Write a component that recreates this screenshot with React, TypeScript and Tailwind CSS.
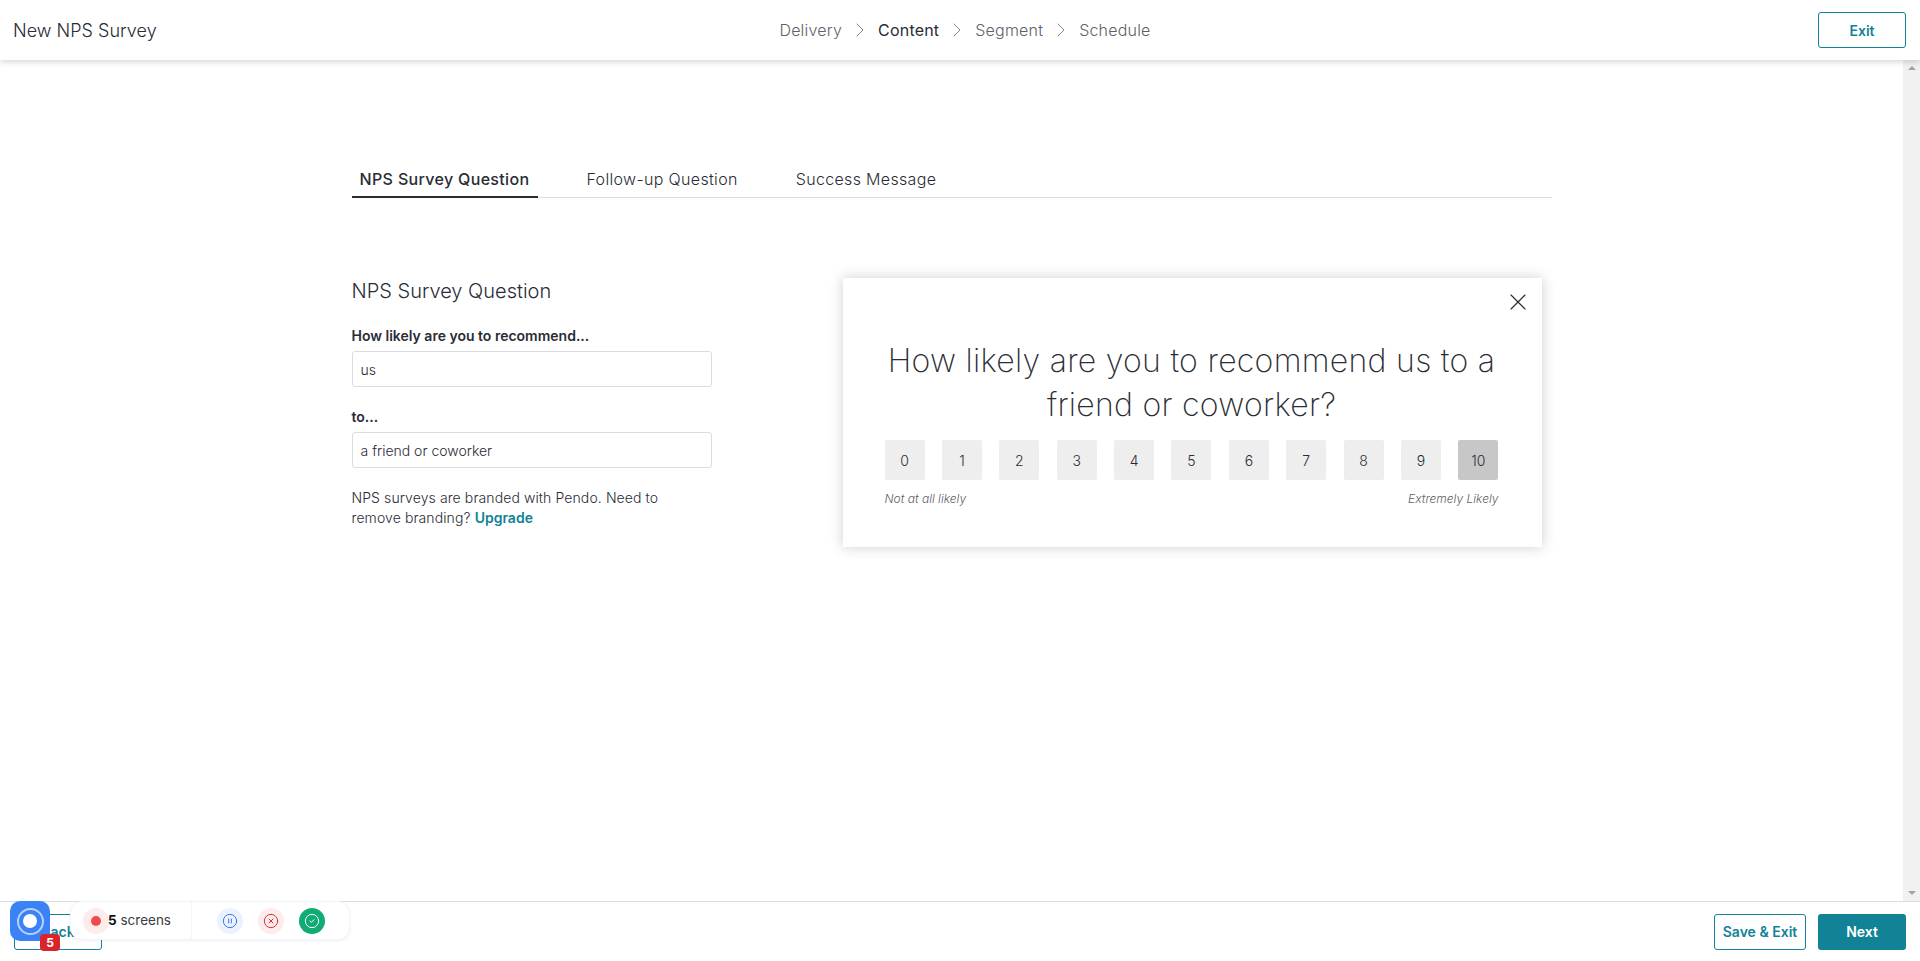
import { ChevronRight, X, CirclePause, CircleX, CircleCheck } from "lucide-react";

const steps = ["Delivery", "Content", "Segment", "Schedule"];
const scores = [0, 1, 2, 3, 4, 5, 6, 7, 8, 9, 10];

const Header = () => {
  return (
    <header className="relative z-10 flex h-[60px] shrink-0 items-center justify-between bg-white pl-[13px] pr-3.5 shadow-[0_2px_6px_rgba(0,0,0,0.16)]">
      <h1 className="w-[200px] text-[18px] font-light tracking-[0.02px] text-[#2a2c35]">New NPS Survey</h1>
      <nav className="ml-[-101px] flex items-center text-[16px] font-light tracking-[0.2px] text-[#2a2c35]">
        {steps.map((step, i) => (
          <div key={step} className="flex items-center">
            <span className={step === "Content" ? "font-normal text-[#2a2c35]" : "text-[#5f6068]"}>{step}</span>
            {i < steps.length - 1 && <ChevronRight size={24} strokeWidth={1} className="mx-[6px] text-[#85868e]" />}
          </div>
        ))}
      </nav>
      <button className="h-9 w-[88px] rounded-[3px] border border-[#128297] text-[14px] font-semibold text-[#128297]">Exit</button>
    </header>
  );
};

const Tabs = () => {
  return (
    <div className="flex h-[37px] items-center border-b border-[#dadce5] text-[16px] font-light tracking-[0.33px] text-[#2a2c35]">
      <div className="mb-[-1px] flex h-[37px] w-[186px] items-center justify-center border-b-2 border-[#2a2c35] font-medium">
        NPS Survey Question
      </div>
      <div className="ml-[49px]">Follow-up Question</div>
      <div className="ml-[58px]">Success Message</div>
    </div>
  );
};

const FormPanel = () => {
  return (
    <div className="w-[360px]">
      <h2 className="text-[20px] font-light leading-[28px] text-[#2a2c35]">NPS Survey Question</h2>
      <label className="mt-[21px] block text-[14px] font-semibold leading-[20px] text-[#2a2c35]">How likely are you to recommend...</label>
      <div className="mt-[5px] flex h-9 items-center rounded-[3px] border border-[#dadce5] px-2 text-[14px] font-light text-[#2a2c35]">us</div>
      <label className="mt-[20px] block text-[14px] font-semibold leading-[20px] text-[#2a2c35]">to...</label>
      <div className="mt-[5px] flex h-9 items-center rounded-[3px] border border-[#dadce5] px-2 text-[14px] font-light text-[#2a2c35]">a friend or coworker</div>
      <p className="mt-[20px] w-[320px] text-[14px] font-light leading-[20px] tracking-[0.1px] text-[#2a2c35]">
        NPS surveys are branded with Pendo. Need to remove branding?{" "}
        <span className="font-semibold tracking-normal text-[#128297]">Upgrade</span>
      </p>
    </div>
  );
};

const Preview = () => {
  return (
    <div className="relative ml-[131px] mt-[1px] h-[269px] w-[699px] bg-white pl-[42px] pr-[43px] shadow-[0_0_12px_rgba(60,60,90,0.25)]">
      <X size={28} strokeWidth={1} className="absolute right-[10px] top-[10px] text-[#2a2c35]" />
      <h3 className="pt-[61px] text-center text-[32px] font-extralight leading-[44px] tracking-[0.28px] text-[#2a2c35]">
        How likely are you to recommend us to a friend or coworker?
      </h3>
      <div className="mt-[13px] flex justify-between">
        {scores.map((n) => (
          <div
            key={n}
            className={`flex h-10 w-10 items-center justify-center rounded-[2px] text-[14px] font-light text-[#2a2c35] ${n === 10 ? "bg-[#c7c7c7]" : "bg-[#eeeeee]"}`}
          >
            {n}
          </div>
        ))}
      </div>
      <div className="mt-[11px] flex justify-between text-[12px] font-light italic leading-[16px] text-[#5f6068]">
        <span>Not at all likely</span>
        <span>Extremely Likely</span>
      </div>
    </div>
  );
};

const Footer = () => {
  return (
    <footer className="flex h-[60px] shrink-0 items-center justify-between border-t border-[#dadce5] bg-white pl-3.5 pr-3.5">
      <button className="h-9 w-[88px] rounded-[3px] border border-[#128297] text-[14px] font-semibold text-[#128297]">Back</button>
      <div className="flex gap-3">
        <button className="h-9 w-[92px] rounded-[3px] border border-[#128297] text-[14px] font-semibold text-[#128297]">Save &amp; Exit</button>
        <button className="h-9 w-[88px] rounded-[3px] bg-[#128297] text-[14px] font-semibold text-white">Next</button>
      </div>
    </footer>
  );
};

const Recorder = () => {
  return (
    <>
      <div className="absolute left-[70px] top-[901px] flex h-[39px] w-[280px] items-center rounded-[12px] border border-[#f1f4fa] bg-white shadow-[0_1px_3px_rgba(120,140,190,0.12)]">
        <div className="flex h-full w-[121px] items-center border-r border-[#f1f4fa] pl-3">
          <div className="flex h-[26px] w-[26px] items-center justify-center rounded-full bg-[#fdecec]">
            <div className="h-[10px] w-[10px] rounded-full bg-[#f2494f]" />
          </div>
          <span className="ml-[-1px] text-[13.5px] text-[#3a3d45]">
            <span className="font-bold text-[#111]">5</span> screens
          </span>
        </div>
        <div className="ml-[25px] flex h-[26px] w-[26px] items-center justify-center rounded-full bg-[#ebf2fe]">
          <CirclePause size={16} strokeWidth={1.5} className="text-[#3b78e7]" />
        </div>
        <div className="ml-[15px] flex h-[26px] w-[26px] items-center justify-center rounded-full bg-[#fdecec]">
          <CircleX size={16} strokeWidth={1.5} className="text-[#d6333b]" />
        </div>
        <div className="ml-[15px] flex h-[26px] w-[26px] items-center justify-center rounded-full bg-[#10ac74]">
          <CircleCheck size={16} strokeWidth={1.5} className="text-white" />
        </div>
      </div>
      <div className="absolute left-[10px] top-[901px] flex h-10 w-10 items-center justify-center rounded-[10px] bg-[#3b82f6]">
        <div className="flex h-[27px] w-[27px] items-center justify-center rounded-full border-2 border-[#b9d2fb]">
          <div className="h-[14px] w-[14px] rounded-full bg-white" />
        </div>
      </div>
      <div className="absolute left-[40px] top-[934px] flex h-[17px] w-5 items-center justify-center rounded-[4px] bg-[#d9252a] text-[12px] font-bold text-white">
        5
      </div>
    </>
  );
};

const Scrollbar = () => {
  return (
    <div className="flex w-[17px] shrink-0 flex-col items-center justify-between bg-[#f1f1f1] py-[6px]">
      <div className="h-0 w-0 border-x-[4px] border-b-[4px] border-x-transparent border-b-[#a3a3a3]" />
      <div className="h-0 w-0 border-x-[4px] border-t-[4px] border-x-transparent border-t-[#a3a3a3]" />
    </div>
  );
};

export default function App() {
  return (
    <div className="relative flex h-[961px] flex-col overflow-hidden bg-white font-['Inter',sans-serif]">
      <Header />
      <div className="flex min-h-0 flex-1">
        <main className="flex-1 pt-[101px]">
          <div className="mx-auto w-[1200px]">
            <Tabs />
            <div className="mt-[79px] flex">
              <FormPanel />
              <Preview />
            </div>
          </div>
        </main>
        <Scrollbar />
      </div>
      <Footer />
      <Recorder />
    </div>
  );
}
